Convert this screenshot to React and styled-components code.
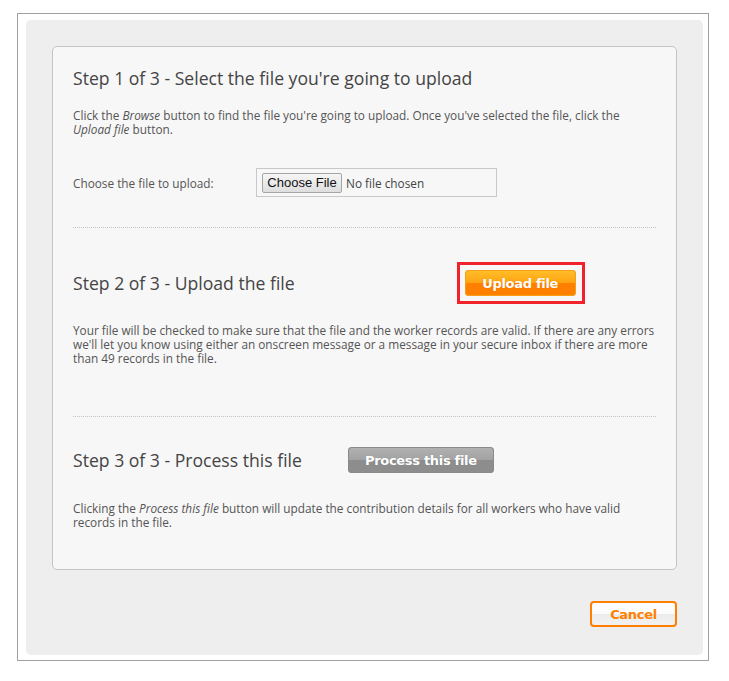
import React from "react";
import styled, { createGlobalStyle } from "styled-components";

const Global = createGlobalStyle`
  html, body { margin: 0; padding: 0; background: #fff; }
  body { font-family: "Open Sans", "DejaVu Sans", sans-serif; }
`;

const Frame = styled.div`
  margin: 13px 0 0 17px;
  width: 692px;
  height: 648px;
  border: 1px solid #a0a0a0;
  padding: 6px 5px 5px 8px;
  box-sizing: border-box;
  background: #fff;
  display: flex;
`;

const Panel = styled.div`
  flex: 1;
  background: #eeeeee;
  border-radius: 5px;
  padding: 26px 26px 0 26px;
  display: flex;
  flex-direction: column;
`;

const Card = styled.div`
  background: #f7f7f7;
  border: 1px solid #c4c4c4;
  border-radius: 5px;
  padding: 20px 20px 40px 20px;
`;

const Heading = styled.h2`
  margin: 0;
  font-family: "Open Sans", sans-serif;
  font-weight: 400;
  font-size: 17.6px;
  line-height: 22px;
  color: #444;
  white-space: nowrap;
`;

const Para = styled.p`
  margin: ${(p) => p.$mt}px 0 0 0;
  font-size: 11.8px;
  line-height: 14px;
  color: #555;
  white-space: nowrap;
  em { font-style: italic; }
`;

const FieldRow = styled.div`
  margin-top: 32px;
  display: flex;
  align-items: center;
`;

const Label = styled.span`
  width: 183px;
  font-size: 11.8px;
  color: #555;
`;

const FileBox = styled.div`
  width: 241px;
  height: 29px;
  box-sizing: border-box;
  border: 1px solid #c8c8c8;
  padding: 3px 5px;
  display: flex;
  align-items: center;
  gap: 4px;
`;

const ChooseBtn = styled.span`
  height: 20px;
  width: 80px;
  box-sizing: border-box;
  border: 1px solid #a5a5a5;
  border-radius: 2px;
  background: linear-gradient(#f6f6f6, #dedede);
  font-family: "Liberation Sans", Arial, sans-serif;
  font-size: 13px;
  color: #111;
  display: flex;
  align-items: center;
  justify-content: center;
`;

const NoFile = styled.span`
  font-size: 11.8px;
  color: #444;
`;

const Separator = styled.hr`
  margin: ${(p) => p.$mt}px 0 0 0;
  border: 0;
  border-top: 1px dotted #c4c4c4;
  height: 0;
`;

const StepRow = styled.div`
  margin-top: ${(p) => p.$mt}px;
  display: flex;
  align-items: center;
  height: ${(p) => p.$h}px;
`;

const Highlight = styled.div`
  margin-left: ${(p) => p.$ml}px;
  border: 3px solid #f2222c;
  padding: 5px 6px 5px 5px;
  display: flex;
`;

const ActionButton = styled.button`
  margin-left: ${(p) => p.$ml || 0}px;
  width: ${(p) => p.$w}px;
  height: 26px;
  border: 0;
  border-radius: 4px;
  font-family: "DejaVu Sans", sans-serif;
  font-weight: 700;
  font-size: 13px;
  color: #fff;
  letter-spacing: -0.3px;
  background: ${(p) =>
    p.$variant === "orange"
      ? "linear-gradient(#ffbf2a 0%, #ffa312 50%, #ff8000 50%, #ff8000 100%)"
      : "linear-gradient(#b2b2b2 0%, #a2a2a2 50%, #8d8d8d 50%, #8d8d8d 100%)"};
  box-shadow: ${(p) =>
    p.$variant === "orange" ? "inset 0 0 0 1px #f6a01a" : "inset 0 0 0 1px #8a8a8a"};
  text-shadow: 0 0 1px rgba(0,0,0,0.15);
  padding: 0;
  cursor: pointer;
`;

const Footer = styled.div`
  margin-top: 31px;
  display: flex;
  justify-content: flex-end;
`;

const CancelButton = styled.button`
  width: 87px;
  height: 26px;
  border: 2px solid #ff8000;
  border-radius: 4px;
  background: linear-gradient(#ffffff 0%, #fbfbfb 50%, #ececec 50%, #f2f2f2 100%);
  color: #ff8000;
  font-family: "DejaVu Sans", sans-serif;
  font-weight: 700;
  font-size: 13px;
  letter-spacing: -0.3px;
  padding: 0;
  cursor: pointer;
`;

export default function App() {
  return (
    <>
      <Global />
      <Frame>
        <Panel>
          <Card>
            <Heading>Step 1 of 3 - Select the file you're going to upload</Heading>
            <Para $mt={19}>
              Click the <em>Browse</em> button to find the file you're going to upload. Once
              you've selected the file, click the
              <br />
              <em>Upload file</em> button.
            </Para>
            <FieldRow>
              <Label>Choose the file to upload:</Label>
              <FileBox>
                <ChooseBtn>Choose File</ChooseBtn>
                <NoFile>No file chosen</NoFile>
              </FileBox>
            </FieldRow>
            <Separator $mt={30} />
            <StepRow $mt={34} $h={42}>
              <Heading>Step 2 of 3 - Upload the file</Heading>
              <Highlight $ml={162}>
                <ActionButton $variant="orange" $w={111}>Upload file</ActionButton>
              </Highlight>
            </StepRow>
            <Para $mt={19}>
              Your file will be checked to make sure that the file and the worker records are
              valid. If there are any errors
              <br />
              we'll let you know using either an onscreen message or a message in your secure
              inbox if there are more
              <br />
              than 49 records in the file.
            </Para>
            <Separator $mt={51} />
            <StepRow $mt={30} $h={26}>
              <Heading>Step 3 of 3 - Process this file</Heading>
              <ActionButton $variant="gray" $w={146} $ml={46}>Process this file</ActionButton>
            </StepRow>
            <Para $mt={28}>
              Clicking the <em>Process this file</em> button will update the contribution details
              for all workers who have valid
              <br />
              records in the file.
            </Para>
          </Card>
          <Footer>
            <CancelButton>Cancel</CancelButton>
          </Footer>
        </Panel>
      </Frame>
    </>
  );
}
